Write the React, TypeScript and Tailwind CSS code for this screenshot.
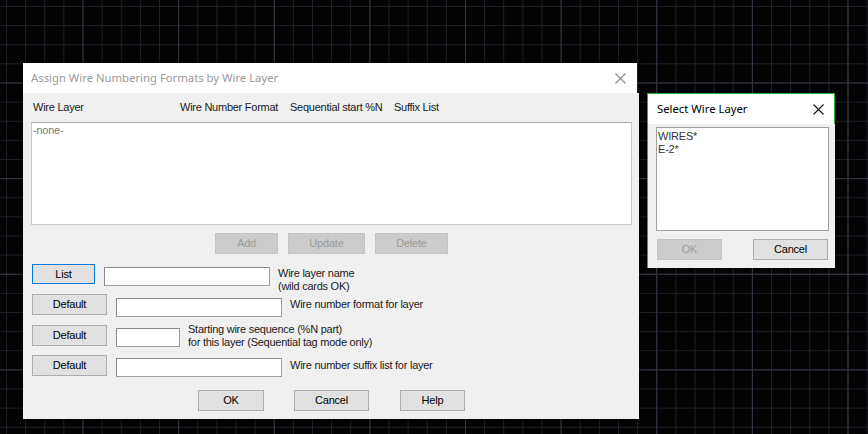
import React from 'react';

const ui = { fontFamily: '"Liberation Sans", Arial, sans-serif' };
const title = { fontFamily: '"Noto Sans", "Open Sans", sans-serif' };

const CloseIcon: React.FC<{ color: string }> = ({ color }) => (
  <svg width="11" height="11" viewBox="0 0 11 11">
    <path d="M0.5 0.5 L10.5 10.5 M10.5 0.5 L0.5 10.5" stroke={color} strokeWidth="1.1" fill="none" />
  </svg>
);

interface BtnProps {
  label: string;
  w: string;
  disabled?: boolean;
}

const Btn: React.FC<BtnProps> = ({ label, w, disabled }) => {
  const cls = disabled
    ? 'bg-[#cccccc] border-[#c4c4c4] text-[#9b9b9b]'
    : 'bg-[#e1e1e1] border-[#adadad] text-black';
  return (
    <button
      className={`${w} h-[21px] shrink-0 border ${cls} text-[11px] tracking-[-0.2px] leading-none flex items-center justify-center`}
      style={ui}
    >
      {label}
    </button>
  );
};

const Field: React.FC<{ w: string }> = ({ w }) => (
  <div className={`${w} h-[19px] shrink-0 bg-white border border-[#a0a0a0] border-t-[#8a8a8a] border-l-[#8a8a8a]`} />
);

const AssignDialog: React.FC = () => (
  <div className="absolute left-[23px] top-[63px] w-[616px] shadow-[0_0_6px_rgba(0,0,0,0.4)]" style={ui}>
    <div className="h-[30px] w-[614px] bg-white flex items-center justify-between pl-[8px] pr-[11px]">
      <span className="text-[11.3px] text-[#9a9a9a]" style={title}>
        Assign Wire Numbering Formats by Wire Layer
      </span>
      <CloseIcon color="#8f8f8f" />
    </div>
    <div className="h-[326px] bg-[#f0f0f0] text-[11px] tracking-[-0.25px] text-[#1a1a1a] leading-[13px]">
      <div className="flex h-[29px] items-center pl-[10px]">
        <span className="w-[147px]">Wire Layer</span>
        <span className="w-[110px]">Wire Number Format</span>
        <span className="w-[104px]">Sequential start %N</span>
        <span>Suffix List</span>
      </div>
      <div className="ml-[8px] w-[601px] h-[103px] bg-white border border-[#c8c8c8] border-t-[#a8a8a8] pl-[1px] pt-[1px] text-[#7a7a7a]">
        -none-
      </div>
      <div className="flex gap-[10px] ml-[192px] mt-[8px]">
        <Btn label="Add" w="w-[63px]" disabled />
        <Btn label="Update" w="w-[77px]" disabled />
        <Btn label="Delete" w="w-[73px]" disabled />
      </div>

      <div className="flex items-start ml-[9px] mt-[10px] h-[30px]">
        <button
          className="w-[63px] h-[20px] shrink-0 border border-[#0078d7] bg-[#e1e1e1] text-[11px] tracking-[-0.2px] text-black flex items-center justify-center"
          style={ui}
        >
          List
        </button>
        <div className="ml-[9px] mt-[3px]">
          <Field w="w-[166px]" />
        </div>
        <div className="ml-[8px] mt-[3px]">
          <div>Wire layer name</div>
          <div>(wild cards OK)</div>
        </div>
      </div>

      <div className="flex items-start ml-[9px] h-[31px]">
        <Btn label="Default" w="w-[75px]" />
        <div className="ml-[9px] mt-[4px]">
          <Field w="w-[166px]" />
        </div>
        <div className="ml-[8px] mt-[4px]">Wire number format for layer</div>
      </div>

      <div className="flex items-start ml-[9px] h-[30px]">
        <Btn label="Default" w="w-[75px]" />
        <div className="ml-[9px] mt-[3px]">
          <Field w="w-[64px]" />
        </div>
        <div className="ml-[8px] -mt-[2px]">
          <div>Starting wire sequence (%N part)</div>
          <div>for this layer (Sequential tag mode only)</div>
        </div>
      </div>

      <div className="flex items-start ml-[9px] h-[35px]">
        <Btn label="Default" w="w-[75px]" />
        <div className="ml-[9px] mt-[3px]">
          <Field w="w-[166px]" />
        </div>
        <div className="ml-[8px] mt-[4px]">Wire number suffix list for layer</div>
      </div>

      <div className="flex ml-[175px]">
        <Btn label="OK" w="w-[66px]" />
        <div className="ml-[30px]">
          <Btn label="Cancel" w="w-[75px]" />
        </div>
        <div className="ml-[31px]">
          <Btn label="Help" w="w-[65px]" />
        </div>
      </div>
    </div>
  </div>
);

const SelectDialog: React.FC = () => (
  <div className="absolute left-[647px] top-[93px] w-[188px]" style={ui}>
    <div className="h-[31px] bg-white border-t border-l border-r border-[#1fae3a] flex items-center justify-between pl-[9px] pr-[10px]">
      <span className="text-[11.3px] text-black" style={title}>
        Select Wire Layer
      </span>
      <CloseIcon color="#111111" />
    </div>
    <div className="h-[144px] bg-[#f0f0f0] border-l border-[#1fae3a] pt-[3px]">
      <div className="ml-[8px] w-[173px] h-[104px] bg-white border border-[#a0a0a0] pl-[1px] pt-[2px] text-[11px] tracking-[-0.2px] leading-[13px] text-[#333333]">
        <div>WIRES*</div>
        <div>E-2*</div>
      </div>
      <div className="flex ml-[9px] mt-[8px]">
        <Btn label="OK" w="w-[65px]" disabled />
        <div className="ml-[31px]">
          <Btn label="Cancel" w="w-[75px]" />
        </div>
      </div>
    </div>
  </div>
);

export default function App() {
  return (
    <div
      className="relative w-[868px] h-[434px] overflow-hidden bg-[#030303] bg-[linear-gradient(to_right,#373746_1px,transparent_1px),linear-gradient(to_bottom,#373746_1px,transparent_1px),linear-gradient(to_right,#1f1f29_1px,transparent_1px),linear-gradient(to_bottom,#1f1f29_1px,transparent_1px)] bg-[size:95.625px_95.625px,95.625px_95.625px,19.125px_19.125px,19.125px_19.125px] bg-[position:82.5px_82.5px,82.5px_82.5px,6px_6px,6px_6px]"
    >
      <AssignDialog />
      <SelectDialog />
    </div>
  );
}
